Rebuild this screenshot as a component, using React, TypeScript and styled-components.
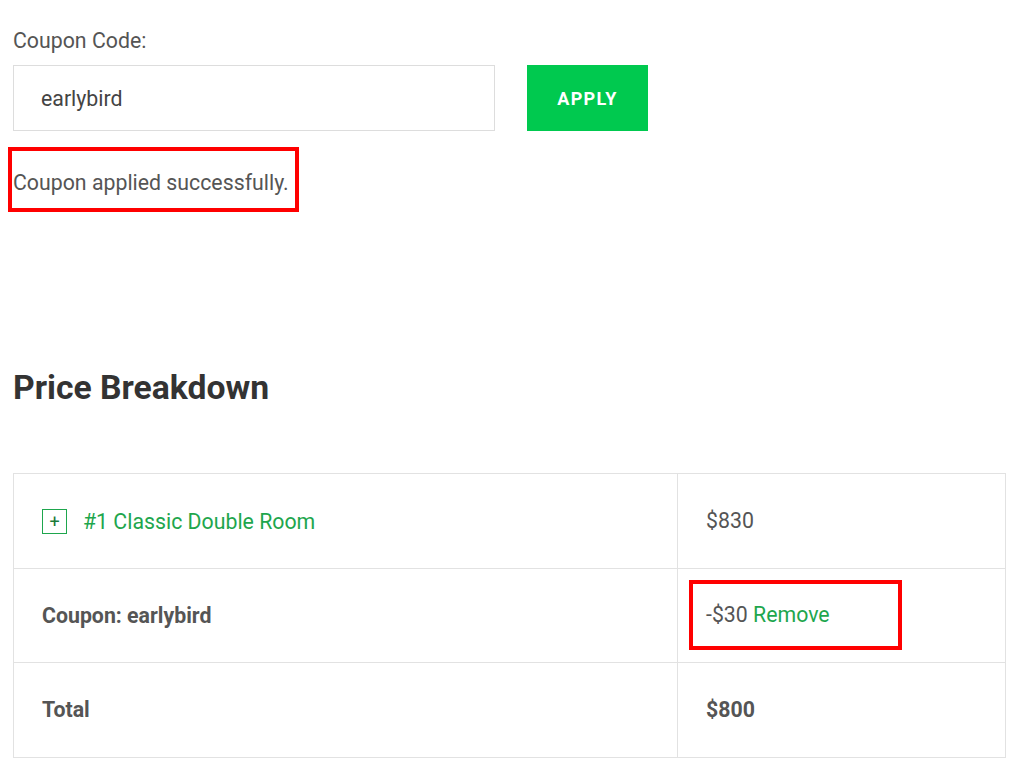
import React from 'react';
import styled, {createGlobalStyle} from "styled-components";

const GlobalStyle = createGlobalStyle`
  body {
    margin: 0;
    background: #ffffff;
    font-family: Roboto, "Liberation Sans", Arial, sans-serif;
    color: #555555;
  }
`

type RowType = {
    label: React.ReactNode
    value: React.ReactNode
    strong?: boolean
}

export default function App() {
    const rows: RowType[] = [
        {
            label: (
                <RoomLink href={"#"}>
                    <Toggle>+</Toggle>
                    #1 Classic Double Room
                </RoomLink>
            ),
            value: "$830",
        },
        {
            label: "Coupon: earlybird",
            value: (
                <Highlight>
                    -$30 <TextLink href={"#"}>Remove</TextLink>
                </Highlight>
            ),
            strong: true,
        },
        {label: "Total", value: "$800", strong: true},
    ];

    return (
        <>
            <GlobalStyle/>
            <Page>
                <Label htmlFor="coupon">Coupon Code:</Label>
                <CouponForm>
                    <Input id="coupon" defaultValue="earlybird"/>
                    <ApplyButton type="button">apply</ApplyButton>
                </CouponForm>
                <Notice>Coupon applied successfully.</Notice>

                <Title>Price Breakdown</Title>

                <Table>
                    <tbody>
                    {rows.map((row, i) => (
                        <tr key={i}>
                            <Cell strong={row.strong}>{row.label}</Cell>
                            <ValueCell strong={row.strong && i === 2} tight={i === 1}>{row.value}</ValueCell>
                        </tr>
                    ))}
                    </tbody>
                </Table>
            </Page>
        </>
    );
}

const Page = styled.div`
  width: 992px;
  padding: 29px 0 0 13px;
`

const Label = styled.label`
  display: block;
  font-size: 21.3px;
  line-height: 24px;
  margin-bottom: 12px;
`

const CouponForm = styled.div`
  display: flex;
  gap: 32px;
`

const Input = styled.input`
  box-sizing: border-box;
  width: 482px;
  height: 66px;
  border: 1px solid #dddddd;
  padding: 0 27px;
  font-family: inherit;
  font-size: 21.3px;
  color: #444444;
  outline: none;
`

const ApplyButton = styled.button`
  width: 121px;
  height: 66px;
  border: none;
  background: #00c94f;
  color: #ffffff;
  font-family: inherit;
  font-weight: 700;
  font-size: 18px;
  letter-spacing: 1.3px;
  text-transform: uppercase;
`

const Notice = styled.div`
  display: inline-block;
  margin: 16px 0 0 -5px;
  border: 4px solid #ff0000;
  padding: 20px 6px 13px 1px;
  font-size: 21.3px;
  line-height: 24px;
`

const Title = styled.h2`
  margin: 158px 0 0;
  font-size: 33.7px;
  line-height: 36px;
  font-weight: 700;
  color: #333333;
`

const Table = styled.table`
  margin-top: 67px;
  width: 993px;
  border-collapse: collapse;

  td {
    border: 1px solid #e2e2e2;
    height: 94.5px;
    box-sizing: border-box;
    vertical-align: middle;
  }
`

const Cell = styled.td<{strong?: boolean}>`
  width: 664px;
  padding: 0 28px;
  font-size: 21.3px;
  font-weight: ${props => props.strong ? 700 : 400};
`

const ValueCell = styled.td<{strong?: boolean, tight?: boolean}>`
  padding: 0 28px 0 ${props => props.tight ? "11px" : "28px"};
  font-size: 21.3px;
  font-weight: ${props => props.strong ? 700 : 400};
`

const RoomLink = styled.a`
  display: inline-flex;
  align-items: center;
  gap: 16px;
  color: #1ea64d;
  text-decoration: none;
`

const Toggle = styled.span`
  box-sizing: border-box;
  width: 25px;
  height: 25px;
  border: 1px solid #1ea64d;
  display: inline-flex;
  align-items: center;
  justify-content: center;
  font-size: 18px;
  line-height: 1;
  color: #1a7a3a;
`

const TextLink = styled.a`
  color: #1ea64d;
  text-decoration: none;
`

const Highlight = styled.span`
  display: inline-block;
  border: 4px solid #ff0000;
  padding: 19px 68px 19px 13px;
  line-height: 24px;
`
